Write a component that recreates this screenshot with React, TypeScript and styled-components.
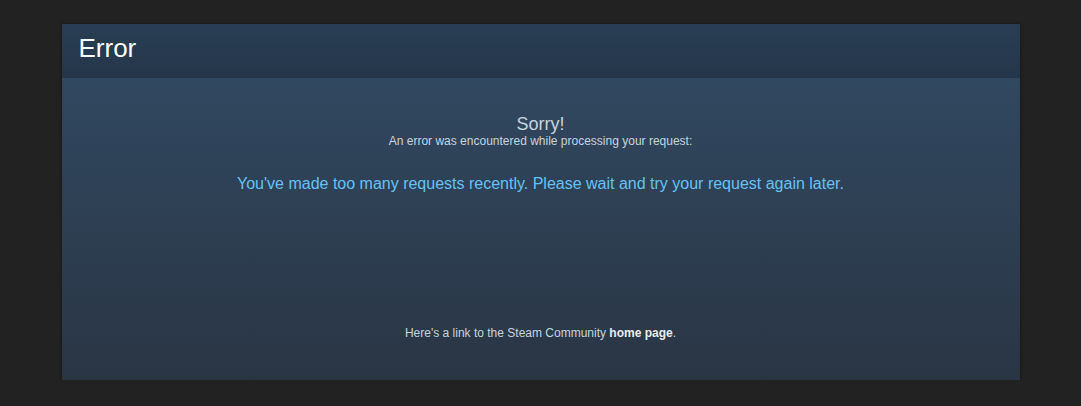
import styled, { createGlobalStyle } from "styled-components";

const GlobalStyle = createGlobalStyle`
  html, body {
    margin: 0;
    padding: 0;
    background: #222222;
    font-family: Arial, "Liberation Sans", Helvetica, sans-serif;
  }
`;

const Page = styled.div`
  padding-top: 24px;
  display: flex;
  justify-content: center;
`;

const Panel = styled.div`
  width: 958px;
  box-shadow: 0 0 3px rgba(0, 0, 0, 0.5);
`;

const Header = styled.div`
  height: 54px;
  padding: 0 17px;
  display: flex;
  align-items: center;
  background: linear-gradient(to bottom, #293e54 0%, #24364a 100%);
`;

const Title = styled.h2`
  margin: 0;
  color: #ffffff;
  font-size: 26px;
  font-weight: normal;
  padding-bottom: 6px;
`;

const Body = styled.div`
  height: 302px;
  display: flex;
  flex-direction: column;
  align-items: center;
  background: linear-gradient(to bottom, #304860 0%, #2a3544 100%);
  color: #c6d4df;
`;

const Sorry = styled.h3`
  margin: 36px 0 0;
  font-size: 18px;
  font-weight: normal;
  line-height: 20px;
`;

const Sub = styled.div`
  font-size: 12px;
  line-height: 14px;
`;

const Message = styled.div`
  margin-top: 26px;
  font-size: 16px;
  line-height: 20px;
  color: #67c1f5;
`;

const Footer = styled.div`
  margin-top: auto;
  margin-bottom: 40px;
  font-size: 12px;
  line-height: 14px;
`;

const HomeLink = styled.a`
  color: #ebebeb;
  font-weight: bold;
  text-decoration: none;
`;

export default function App() {
  return (
    <>
      <GlobalStyle />
      <Page>
        <Panel>
          <Header>
            <Title>Error</Title>
          </Header>
          <Body>
            <Sorry>Sorry!</Sorry>
            <Sub>An error was encountered while processing your request:</Sub>
            <Message>
              You've made too many requests recently. Please wait and try your
              request again later.
            </Message>
            <Footer>
              Here's a link to the Steam Community{" "}
              <HomeLink href="#">home page</HomeLink>.
            </Footer>
          </Body>
        </Panel>
      </Page>
    </>
  );
}
